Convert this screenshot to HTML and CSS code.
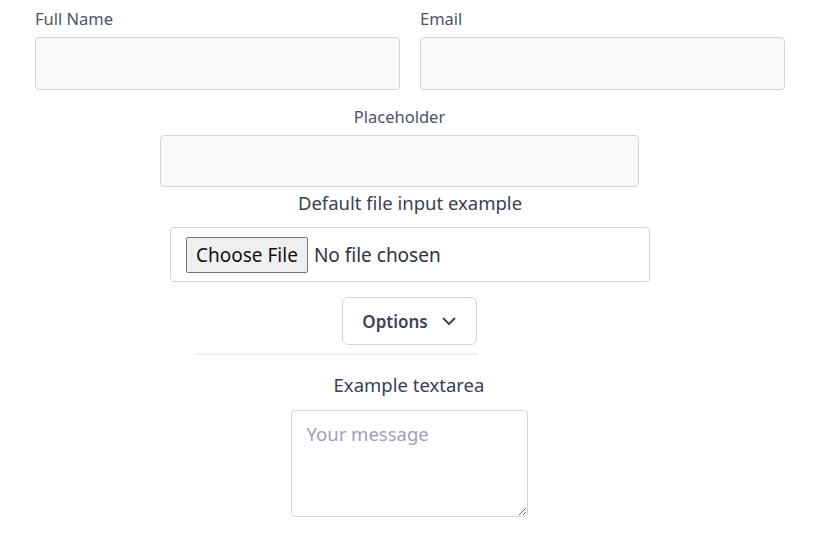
FILE: index.html
```html
<!DOCTYPE html>
<html>
<head>
<meta charset="utf-8">
<link rel="stylesheet" href="styles.css">
</head>
<body>
<form class="form">
  <div class="row">
    <div class="field">
      <label class="lbl">Full Name</label>
      <input class="inp" type="text">
    </div>
    <div class="field">
      <label class="lbl">Email</label>
      <input class="inp" type="email">
    </div>
  </div>
  <div class="ph-field">
    <label class="lbl center">Placeholder</label>
    <input class="inp ph-inp" type="text">
  </div>
  <div class="file-field">
    <label class="lbl-lg">Default file input example</label>
    <div class="file">
      <span class="file-btn">Choose File</span>
      <span class="file-name">No file chosen</span>
    </div>
  </div>
  <div class="opt-wrap">
    <button type="button" class="opt-btn">Options
      <svg class="chev" width="14" height="9" viewBox="0 0 14 9"><path d="M1.5 1.5 L7 7 L12.5 1.5" fill="none" stroke="#374151" stroke-width="1.8" stroke-linecap="round" stroke-linejoin="round"/></svg>
    </button>
  </div>
  <div class="divider"></div>
  <div class="ta-field">
    <label class="lbl-lg">Example textarea</label>
    <textarea class="ta" placeholder="Your message"></textarea>
  </div>
</form>
</body>
</html>
```
FILE: styles.css
```css
html, body {
  margin: 0;
  padding: 0;
  background: #ffffff;
}
body {
  font-family: "Noto Sans", "Open Sans", sans-serif;
  color: #374151;
}
.form {
  width: 750px;
  margin-left: 35px;
  padding-top: 6px;
  display: flex;
  flex-direction: column;
}
.row {
  display: grid;
  grid-template-columns: 1fr 1fr;
  column-gap: 20px;
}
.field {
  display: flex;
  flex-direction: column;
}
.lbl {
  display: block;
  font-size: 16.5px;
  line-height: 25px;
  color: #4b5563;
  margin-bottom: 6px;
}
.inp {
  box-sizing: border-box;
  height: 53px;
  width: 100%;
  margin: 0;
  border: 1px solid #d4d4d8;
  border-radius: 4px;
  background: #f8f8f8;
  font: inherit;
}
.ph-field {
  margin-top: 14px;
  width: 479px;
  margin-left: 125px;
  display: flex;
  flex-direction: column;
}
.center {
  text-align: center;
}
.ph-inp {
  height: 52px;
}
.file-field {
  margin-top: 2px;
  display: flex;
  flex-direction: column;
  align-items: center;
}
.lbl-lg {
  display: block;
  font-size: 18.5px;
  line-height: 27px;
  color: #374151;
  text-align: center;
}
.file {
  box-sizing: border-box;
  margin-top: 11px;
  width: 480px;
  height: 55px;
  border: 1px solid #d4d4d8;
  border-radius: 4px;
  padding: 0 15px;
  display: flex;
  align-items: center;
  gap: 6px;
  font-size: 19px;
  color: #2d3440;
}
.file-btn {
  box-sizing: border-box;
  height: 36px;
  padding: 0 9px;
  display: flex;
  align-items: center;
  border: 1px solid #767676;
  border-radius: 2px;
  background: #efefef;
  color: #111;
}
.opt-wrap {
  margin-top: 15px;
  display: flex;
  justify-content: center;
  padding-right: 2px;
}
.opt-btn {
  box-sizing: border-box;
  width: 135px;
  height: 48px;
  border: 1px solid #d4d4d8;
  border-radius: 6px;
  background: #fff;
  font-family: "Noto Sans", sans-serif;
  font-size: 17px;
  font-weight: 600;
  color: #3b4452;
  display: flex;
  align-items: center;
  justify-content: center;
  gap: 14px;
  padding: 0;
}
.divider {
  margin-top: 8px;
  margin-left: 161px;
  width: 282px;
  height: 2px;
  background: #f0f0f0;
}
.ta-field {
  margin-top: 16px;
  display: flex;
  flex-direction: column;
  align-items: center;
  padding-right: 2px;
}
.ta {
  box-sizing: border-box;
  margin-top: 12px;
  width: 237px;
  height: 107px;
  border: 1px solid #d4d4d8;
  border-radius: 4px;
  padding: 10px 15px;
  font-family: "Noto Sans", sans-serif;
  font-size: 18.5px;
  color: #374151;
  resize: vertical;
}
.ta::placeholder {
  color: #9ca3af;
}
```
